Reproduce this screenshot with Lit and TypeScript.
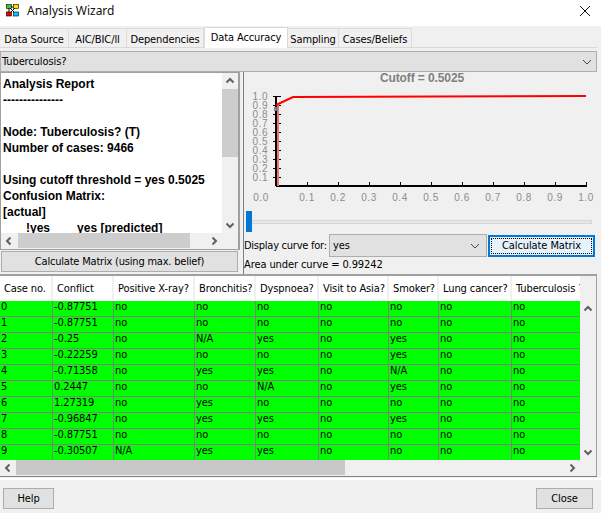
import { LitElement, html, css, svg } from "lit";
import { customElement } from "lit/decorators.js";

const TABS = ["Data Source", "AIC/BIC/ll", "Dependencies", "Data Accuracy", "Sampling", "Cases/Beliefs"];
const TAB_W = [69, 58, 77, 84, 51, 73];
const COLS = ["Case no.", "Conflict", "Positive X-ray?", "Bronchitis?", "Dyspnoea?", "Visit to Asia?", "Smoker?", "Lung cancer?", "Tuberculosis ?"];
const ROWS = [
  ["0", "-0.87751", "no", "no", "no", "no", "no", "no", "no"],
  ["1", "-0.87751", "no", "no", "no", "no", "no", "no", "no"],
  ["2", "-0.25", "no", "N/A", "yes", "no", "yes", "no", "no"],
  ["3", "-0.22259", "no", "no", "no", "no", "yes", "no", "no"],
  ["4", "-0.71358", "no", "yes", "yes", "no", "N/A", "no", "no"],
  ["5", "0.2447", "no", "no", "N/A", "no", "yes", "no", "no"],
  ["6", "1.27319", "no", "yes", "no", "no", "no", "no", "no"],
  ["7", "-0.96847", "no", "yes", "yes", "no", "yes", "no", "no"],
  ["8", "-0.87751", "no", "no", "no", "no", "no", "no", "no"],
  ["9", "-0.30507", "N/A", "yes", "yes", "no", "no", "no", "no"],
];
const REPORT = [
  "Analysis Report", "---------------", "", "Node: Tuberculosis? (T)", "Number of cases: 9466", "",
  "Using cutoff threshold = yes 0.5025", "Confusion Matrix:", "[actual]",
];

const chevron = (dir: "up" | "down" | "left" | "right") => {
  const d = {
    up: "M1.5 6.5 L5 3 L8.5 6.5",
    down: "M1.5 3.5 L5 7 L8.5 3.5",
    left: "M6.5 1.5 L3 5 L6.5 8.5",
    right: "M3.5 1.5 L7 5 L3.5 8.5",
  }[dir];
  return html`<svg class="chev" width="10" height="10" viewBox="0 0 10 10"><path d="${d}" fill="none" stroke="#606060" stroke-width="2"/></svg>`;
};

const comboChevron = html`<svg width="10" height="6" viewBox="0 0 10 6"><path d="M1 1 L5 5 L9 1" fill="none" stroke="#444" stroke-width="1"/></svg>`;

@customElement("app-root")
export class AppRoot extends LitElement {
  static styles = css`
    :host { display: block; width: 601px; height: 513px; overflow: hidden; background: #f0f0f0; color: #000;
      font-family: "DejaVu Sans Condensed", "DejaVu Sans", sans-serif; font-stretch: condensed; font-size: 11px; letter-spacing: -0.1px; }
    * { box-sizing: border-box; }
    .win { display: flex; flex-direction: column; width: 601px; height: 513px; }
    .title { height: 26px; background: #fff; display: flex; align-items: center; padding: 0 11px 5px 6px; flex: none; }
    .title-text { font-family: "Noto Sans", sans-serif; font-stretch: normal; letter-spacing: 0; font-size: 12px; margin-left: 8px; flex: 1; color: #111; }
    .tabs { display: flex; height: 21px; padding-top: 2px; flex: none; align-items: flex-start; position: relative; }
    .tab { height: 19px; display: flex; align-items: center; justify-content: center; background: #f0f0f0;
      border: 1px solid #dcdcdc; border-bottom: none; border-left: none; flex: none; padding-top: 3px; white-space: nowrap; }
    .tab.on { background: #fff; height: 21px; margin-top: -1px; border: 1px solid #d9d9d9; border-bottom: none; padding: 0 0 1px 0; position: relative; z-index: 1; }
    .pane { width: 597px; flex: none; height: 430px; display: flex; flex-direction: column; border-top: 1px solid #d9d9d9; background: #f0f0f0; }
    .combo { height: 21px; margin-top: 3px; flex: none; background: #e1e1e1; border: 1px solid #adadad; display: flex; align-items: center; justify-content: space-between; padding: 0 4px 0 1px; }
    .middle { display: flex; height: 202px; flex: none; }
    .left { width: 240px; flex: none; display: flex; flex-direction: column; }
    .report { height: 178px; flex: none; border: 1px solid #a0a0a0; border-left-width: 1px; border-right-width: 2px;
      display: grid; grid-template-columns: 221px 16px; grid-template-rows: 160px 16px; }
    .report-text { background: #fff; overflow: hidden; padding: 3px 0 0 2px; font: bold 12px/16px "Liberation Sans", Arial, sans-serif; letter-spacing: 0; }
    .line { height: 16px; white-space: pre; }
    .sp { display: inline-block; }
    .i1 { width: 23px; } .i2 { width: 27px; }
    .sb-v { display: flex; flex-direction: column; background: #f0f0f0; position: relative; align-items: center; }
    .sb-h { display: flex; background: #f0f0f0; position: relative; align-items: center; }
    .arrow { width: 16px; height: 16px; flex: none; display: flex; align-items: center; justify-content: center; }
    .track { flex: 1; position: relative; align-self: stretch; }
    .thumb-v1 { position: absolute; top: 0; left: 0; right: 0; height: 68px; background: #cdcdcd; }
    .thumb-h1 { position: absolute; left: 1px; top: 0; bottom: 1px; width: 172px; background: #cdcdcd; }
    .corner { background: #f0f0f0; }
    .btn { background: #e1e1e1; border: 1px solid #adadad; display: flex; align-items: center; justify-content: center; flex: none; white-space: nowrap; }
    .calc-wide { height: 21px; margin: 1px 0 0 1px; width: 237px; letter-spacing: -0.2px; }
    .right { width: 354px; margin-left: 3px; flex: none; border-left: 1px solid #808080; display: flex; flex-direction: column; }
    .chart { display: block; flex: none; }
    .slider { height: 23px; flex: none; position: relative; display: flex; align-items: center; padding: 0 5px 0 2px; }
    .slider-track { flex: 1; height: 4px; background: #e7e7e7; border: 1px solid #d6d6d6; }
    .slider-thumb { position: absolute; left: 2px; top: 1px; width: 6px; height: 21px; background: #0078d7; }
    .display { display: flex; height: 23px; align-items: center; flex: none; margin-top: 1px; }
    .display-label { width: 85px; flex: none; white-space: nowrap; letter-spacing: -0.25px; }
    .combo2 { width: 158px; height: 23px; flex: none; background: #e1e1e1; border: 1px solid #adadad; display: flex; align-items: center; justify-content: space-between; padding: 0 6px 0 3px; }
    .calc { width: 107px; height: 22px; margin-left: 1px; flex: none; background: #e5f1fb; border: 2px solid #0078d7; padding: 1px; }
    .calc span { display: flex; width: 100%; height: 100%; align-items: center; justify-content: center; outline: 1px dotted #000; outline-offset: -1px; white-space: nowrap; }
    .area { height: 14px; line-height: 14px; flex: none; margin-top: 1px; white-space: nowrap; }
    .table-wrap { flex: none; height: 203px; border-top: 2px solid #a0a0a0; border-right: 1px solid #a0a0a0; border-bottom: 1px solid #808080;
      display: grid; grid-template-columns: 580px 16px; grid-template-rows: 184px 16px; }
    .table { overflow: hidden; background: #f0f0f0; }
    .row { display: grid; grid-template-columns: 53px 61px 81px 61px 63px 70px 50px 73px 68px; }
    .hd { height: 25px; background: #fff; }
    .hc { display: flex; align-items: center; justify-content: flex-start; padding: 0 0 1px 4px; border-right: 2px solid #f0f0f0; white-space: nowrap; overflow: hidden; }
    .hc:last-child { border-right: none; }
    .body { height: 159px; overflow: hidden; background: #0f0; }
    .dr { height: 16px; }
    .dc { border-right: 1px solid #808080; border-bottom: 1px solid #808080; padding-left: 1px; line-height: 12px; white-space: nowrap; background: #0f0; overflow: hidden; }
    .dc:last-child { border-right: none; }
    .tv-track { flex: 1; position: relative; }
    .thumb-v2 { position: absolute; left: 0; right: 0; top: 0; height: 11px; background: #cdcdcd; }
    .vbar { padding-top: 25px; }
    .thumb-h2 { position: absolute; left: 0; top: 0; bottom: 1px; width: 329px; background: #c8c8c8; }
    .sep { height: 2px; background: #fff; margin-top: 1px; flex: none; width: 601px; }
    .foot { flex: 1; display: flex; justify-content: space-between; align-items: flex-start; padding: 8px 8px 0 3px; }
    .foot .btn { height: 21px; }
    .help { width: 51px; } .close { width: 57px; }
  `;

  private chart() {
    const x0 = 32, yb = 114, sx = 31, sy = 9;
    const ticksX = Array.from({ length: 10 }, (_, i) => i + 1);
    const ticksY = Array.from({ length: 10 }, (_, i) => i + 1);
    return html`<svg class="chart" width="353" height="138" viewBox="0 0 353 138">
      <text x="178" y="10" text-anchor="middle" font-family="Liberation Sans" font-size="12" font-weight="bold" fill="#808080">Cutoff = 0.5025</text>
      ${ticksY.map((i) => svg`
        <text x="24" y="${yb - i * sy + 4}" text-anchor="end" font-family="Liberation Sans" font-size="10" fill="#8c8c8c" letter-spacing="0.5">${(i / 10).toFixed(1)}</text>
        <rect x="${x0 - 3}" y="${yb - i * sy}" width="8" height="1" fill="#000"/>`)}
      ${ticksX.map((i) => svg`
        <text x="${x0 + i * sx}" y="${yb + 15}" text-anchor="middle" font-family="Liberation Sans" font-size="10" fill="#8c8c8c" letter-spacing="0.5">${(i / 10).toFixed(1)}</text>
        <rect x="${x0 + i * sx}" y="${yb - 4}" width="1" height="5" fill="#000"/>`)}
      <text x="17" y="${yb + 15}" text-anchor="middle" font-family="Liberation Sans" font-size="10" fill="#8c8c8c" letter-spacing="0.5">0.0</text>
      <rect x="${x0 - 1}" y="${yb - 90}" width="2" height="90" fill="#000"/>
      <rect x="${x0}" y="${yb - 1}" width="311" height="2" fill="#000"/>
      <rect x="${x0 + 1}" y="${yb - 81}" width="2" height="81" fill="#f07070"/>
      <rect x="${x0 - 2}" y="${yb - 79}" width="4" height="4" fill="#808080"/>
      <polyline points="${x0},${yb - 81} ${x0 + 17},${yb - 89} ${x0 + 310},${yb - 90}" fill="none" stroke="#f00" stroke-width="2"/>
    </svg>`;
  }

  render() {
    return html`<div class="win">
      <div class="title">
        <svg width="13" height="13" viewBox="0 0 13 13">
          <path d="M3 3 L10 3 M3 3 L10 10 M3 10 L10 3 M3 3 L3 10" stroke="#000" stroke-width="1" fill="none"/>
          <rect x="0.5" y="0.5" width="5" height="4" fill="#3c3" stroke="#000" stroke-width="0.6"/>
          <rect x="7.5" y="0.5" width="5" height="4" fill="#fd0" stroke="#000" stroke-width="0.6"/>
          <rect x="0.5" y="8" width="5" height="4" fill="#e00" stroke="#000" stroke-width="0.6"/>
          <rect x="7.5" y="8" width="5" height="4" fill="#0cf" stroke="#000" stroke-width="0.6"/>
        </svg>
        <span class="title-text">Analysis Wizard</span>
        <svg width="10" height="10" viewBox="0 0 10 10"><path d="M0 0 L10 10 M10 0 L0 10" stroke="#111" stroke-width="1" fill="none"/></svg>
      </div>
      <div class="tabs">
        ${TABS.map((t, i) => html`<div class="tab ${i === 3 ? "on" : ""}" style="width:${TAB_W[i]}px">${t}</div>`)}
      </div>
      <div class="pane">
        <div class="combo"><span>Tuberculosis?</span>${comboChevron}</div>
        <div class="middle">
          <div class="left">
            <div class="report">
              <div class="report-text">${REPORT.map((l) => html`<div class="line">${l}</div>`)}<div class="line"><span class="sp i1"></span>!yes<span class="sp i2"></span>yes [predicted]</div></div>
              <div class="sb-v">
                <div class="arrow">${chevron("up")}</div>
                <div class="track"><div class="thumb-v1"></div></div>
                <div class="arrow">${chevron("down")}</div>
              </div>
              <div class="sb-h">
                <div class="arrow">${chevron("left")}</div>
                <div class="track"><div class="thumb-h1"></div></div>
                <div class="arrow">${chevron("right")}</div>
              </div>
              <div class="corner"></div>
            </div>
            <div class="btn calc-wide">Calculate Matrix (using max. belief)</div>
          </div>
          <div class="right">
            ${this.chart()}
            <div class="slider"><div class="slider-track"></div><div class="slider-thumb"></div></div>
            <div class="display">
              <span class="display-label">Display curve for:</span>
              <div class="combo2"><span>yes</span>${comboChevron}</div>
              <div class="calc"><span>Calculate Matrix</span></div>
            </div>
            <div class="area">Area under curve = 0.99242</div>
          </div>
        </div>
        <div class="table-wrap">
          <div class="table">
            <div class="row hd">${COLS.map((c) => html`<div class="hc">${c}</div>`)}</div>
            <div class="body">
              ${ROWS.map((r) => html`<div class="row dr">${r.map((c) => html`<div class="dc">${c}</div>`)}</div>`)}
            </div>
          </div>
          <div class="sb-v vbar">
            <div class="arrow">${chevron("up")}</div>
            <div class="tv-track"><div class="thumb-v2"></div></div>
            <div class="arrow">${chevron("down")}</div>
          </div>
          <div class="sb-h">
            <div class="arrow">${chevron("left")}</div>
            <div class="track"><div class="thumb-h2"></div></div>
            <div class="arrow">${chevron("right")}</div>
          </div>
          <div class="corner"></div>
        </div>
      </div>
      <div class="sep"></div>
      <div class="foot">
        <div class="btn help">Help</div>
        <div class="btn close">Close</div>
      </div>
    </div>`;
  }
}
